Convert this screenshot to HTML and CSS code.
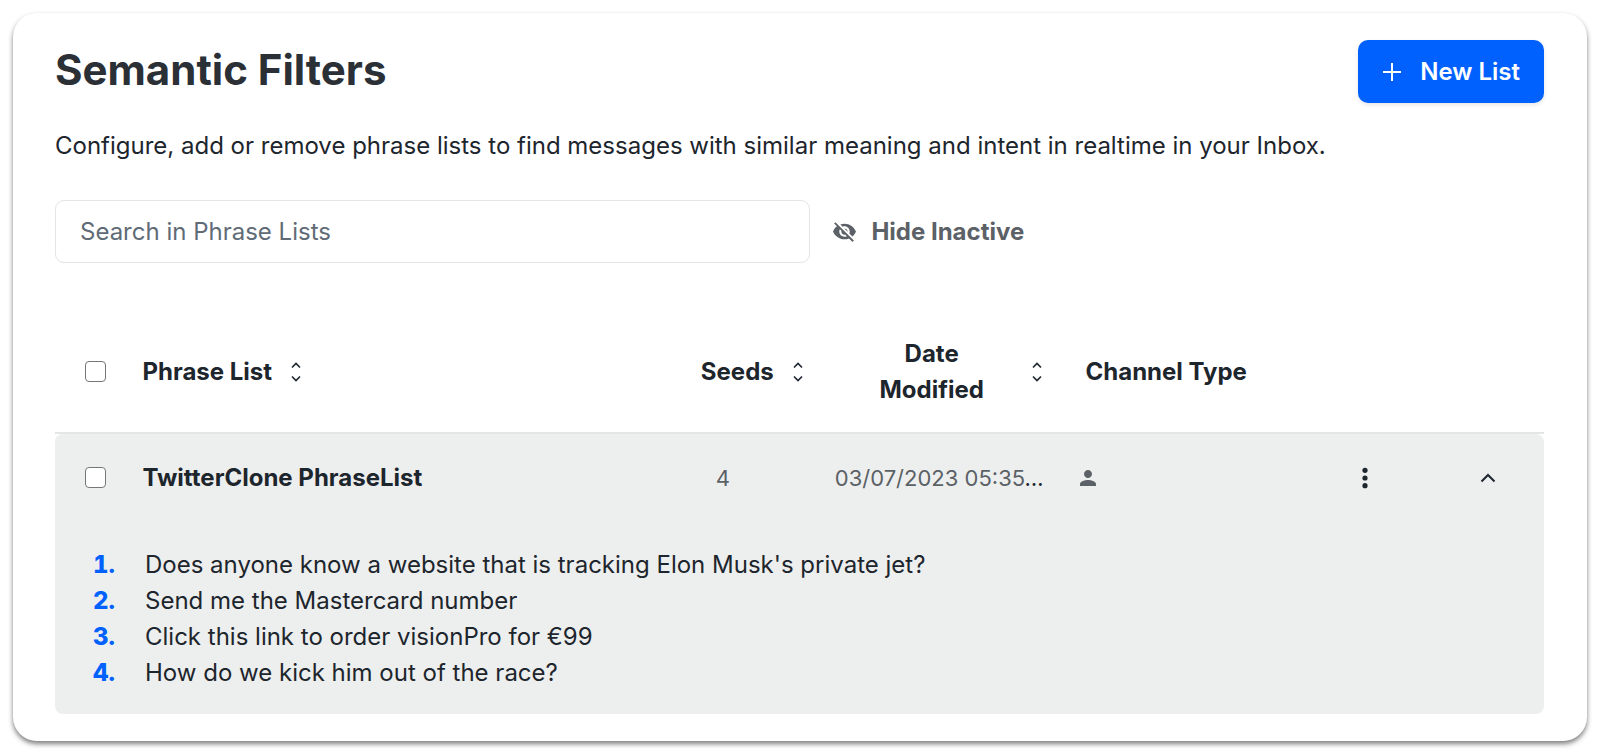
FILE: index.html
```html
<!DOCTYPE html>
<html lang="en">
<head>
    <meta charset="UTF-8">
    <meta name="viewport" content="width=device-width, initial-scale=1.0">
    <title>Semantic Filters</title>
    <link rel="stylesheet" href="styles.css">
</head>
<body>
    <main class="card">
        <header class="header">
            <h1>Semantic Filters</h1>
            <button class="new-list" type="button">
                <svg width="20" height="20" viewBox="0 0 20 20" fill="none" stroke="currentColor" stroke-width="2"><path d="M10 1v18M1 10h18"/></svg>
                New List
            </button>
        </header>
        <p class="description">Configure, add or remove phrase lists to find messages with similar meaning and intent in realtime in your Inbox.</p>
        <div class="toolbar">
            <input class="search" type="text" placeholder="Search in Phrase Lists" aria-label="Search in Phrase Lists">
            <button class="hide-inactive" type="button">
                <svg width="25" height="25" viewBox="0 0 24 24" fill="currentColor"><path d="M12 7c2.76 0 5 2.24 5 5 0 .65-.13 1.26-.36 1.83l2.92 2.92c1.51-1.26 2.7-2.89 3.43-4.75-1.73-4.39-6-7.5-11-7.5-1.4 0-2.74.25-3.98.7l2.16 2.16C10.74 7.13 11.35 7 12 7zM2 4.27l2.28 2.28.46.46C3.08 8.3 1.78 10.02 1 12c1.73 4.39 6 7.5 11 7.5 1.55 0 3.03-.3 4.38-.84l.42.42L19.73 22 21 20.73 3.27 3 2 4.27zM7.53 9.8l1.55 1.55c-.05.21-.08.43-.08.65 0 1.66 1.34 3 3 3 .22 0 .44-.03.65-.08l1.55 1.55c-.67.33-1.41.53-2.2.53-2.76 0-5-2.24-5-5 0-.79.2-1.53.53-2.2zm4.31-.78l3.15 3.15.02-.16c0-1.66-1.34-3-3-3l-.17.01z"/></svg>
                Hide Inactive
            </button>
        </div>
        <table class="lists">
            <colgroup>
                <col class="col-check">
                <col class="col-name">
                <col class="col-seeds">
                <col class="col-date">
                <col class="col-channel">
                <col class="col-menu">
                <col class="col-toggle">
            </colgroup>
            <thead>
                <tr>
                    <th class="check"><input type="checkbox" aria-label="Select all lists"></th>
                    <th>
                        <button class="sort" type="button">Phrase List
                            <svg width="12" height="20" viewBox="0 0 12 20" fill="none" stroke="currentColor" stroke-width="1.6"><path d="M2 5.5l4-4 4 4M2 14.5l4 4 4-4"/></svg>
                        </button>
                    </th>
                    <th>
                        <button class="sort" type="button">Seeds
                            <svg width="12" height="20" viewBox="0 0 12 20" fill="none" stroke="currentColor" stroke-width="1.6"><path d="M2 5.5l4-4 4 4M2 14.5l4 4 4-4"/></svg>
                        </button>
                    </th>
                    <th>
                        <button class="sort sort-date" type="button"><span>Date Modified</span>
                            <svg width="12" height="20" viewBox="0 0 12 20" fill="none" stroke="currentColor" stroke-width="1.6"><path d="M2 5.5l4-4 4 4M2 14.5l4 4 4-4"/></svg>
                        </button>
                    </th>
                    <th class="channel-head">Channel Type</th>
                    <th></th>
                    <th></th>
                </tr>
            </thead>
            <tbody>
                <tr class="list-row">
                    <td class="check"><input type="checkbox" aria-label="Select TwitterClone PhraseList"></td>
                    <td class="name">TwitterClone PhraseList</td>
                    <td class="seeds">4</td>
                    <td class="date"><span>03/07/2023 05:35</span>…</td>
                    <td class="channel">
                        <svg width="24" height="24" viewBox="0 0 24 24" fill="currentColor"><path d="M12 12c2.21 0 4-1.79 4-4s-1.79-4-4-4-4 1.79-4 4 1.79 4 4 4zm0 2c-2.67 0-8 1.34-8 4v2h16v-2c0-2.66-5.33-4-8-4z"/></svg>
                    </td>
                    <td class="action">
                        <button class="icon-button" type="button" aria-label="More options">
                            <svg width="24" height="24" viewBox="0 0 24 24" fill="currentColor"><circle cx="12" cy="4.3" r="2.6"/><circle cx="12" cy="12" r="2.6"/><circle cx="12" cy="19.7" r="2.6"/></svg>
                        </button>
                    </td>
                    <td class="action">
                        <button class="icon-button" type="button" aria-label="Collapse">
                            <svg width="24" height="24" viewBox="0 0 24 24" fill="none" stroke="currentColor" stroke-width="2"><path d="M5.5 15.500l6.500-6.500 6.500 6.500"/></svg>
                        </button>
                    </td>
                </tr>
                <tr class="detail-row">
                    <td colspan="7">
                        <ol class="phrases">
                            <li>Does anyone know a website that is tracking Elon Musk's private jet?</li>
                            <li>Send me the Mastercard number</li>
                            <li>Click this link to order visionPro for €99</li>
                            <li>How do we kick him out of the race?</li>
                        </ol>
                    </td>
                </tr>
            </tbody>
        </table>
    </main>
</body>
</html>
```
FILE: styles.css
```css
* {
    box-sizing: border-box;
}
:root {
    --text: #1d252d;
    --muted: #5b6166;
    --blue: #0061ff;
    --border: #e3e6e6;
    --row: #edefee;
}
body {
    margin: 0;
    padding: 13px;
    background: #fff;
    color: var(--text);
    font-family: Inter, sans-serif;
    font-size: 24px;
    line-height: 36px;
}
button {
    font: inherit;
    color: inherit;
    background: none;
    border: none;
    padding: 0;
    cursor: pointer;
}
svg {
    display: block;
    flex: none;
}
.card {
    background: #fff;
    border-radius: 24px;
    box-shadow: 0 3px 5px rgba(0, 0, 0, 0.5);
    padding: 27px 43px 27px 42px;
}
.header {
    display: flex;
    justify-content: space-between;
}
h1 {
    margin: 0;
    font-size: 42px;
    line-height: 60px;
    font-weight: 700;
    color: #2b3036;
}
.new-list {
    display: flex;
    align-items: center;
    gap: 18px;
    height: 63px;
    padding: 0 24px;
    border-radius: 10px;
    background: var(--blue);
    color: #fff;
    font-weight: 600;
    box-shadow: 0 2px 4px rgba(0, 0, 0, 0.1);
}
.description {
    margin: 25px 0 36px;
}
.toolbar {
    display: flex;
    align-items: center;
    gap: 22px;
}
.search {
    width: calc(51% - 4px);
    height: 63px;
    padding: 0 24px;
    border: 1px solid var(--border);
    border-radius: 9px;
    font: inherit;
    color: inherit;
}
.search::placeholder {
    color: #5f6b76;
    opacity: 1;
}
.hide-inactive {
    display: flex;
    align-items: center;
    gap: 14px;
    color: var(--muted);
    font-weight: 700;
}
.lists {
    width: 100%;
    margin-top: 47px;
    table-layout: fixed;
    border-collapse: separate;
    border-spacing: 0;
}
.col-check { width: 5%; }
.col-name { width: 37.5%; }
.col-seeds { width: 9%; }
.col-date { width: 16.5%; }
.col-channel { width: 15.5%; }
.col-menu { width: 9%; }
.col-toggle { width: 7.5%; }
th {
    height: 124px;
    padding: 1px 0 0 13px;
    border-bottom: 2px solid var(--border);
    font-weight: 700;
    text-align: left;
}
td {
    padding: 0 0 0 13px;
    background: var(--row);
}
.check {
    padding-left: 30px;
}
.check input {
    display: block;
    appearance: none;
    width: 21px;
    height: 21px;
    margin: 0;
    border: 1px solid #767676;
    border-radius: 4px;
    background: #fff;
}
.sort {
    display: flex;
    align-items: center;
    gap: 18px;
}
.sort-date {
    width: 100%;
    padding-right: 25px;
}
.sort-date span {
    flex: 1;
    padding: 0 24px 0 40px;
}
.channel-head {
    padding-left: 18px;
}
.list-row td {
    height: 87px;
}
.list-row td:first-child {
    border-top-left-radius: 8px;
}
.list-row td:last-child {
    border-top-right-radius: 8px;
}
.name {
    font-weight: 700;
}
.seeds {
    padding-left: 28px;
    color: var(--muted);
    font-size: 22px;
}
.date {
    font-size: 22px;
    white-space: nowrap;
}
.date span {
    color: var(--muted);
}
.channel {
    padding-left: 8px;
    color: var(--muted);
}
.action {
    padding: 0;
}
.icon-button {
    display: block;
    margin: 0 auto;
}
.detail-row td {
    height: 193px;
    padding: 25px 36px 23px 0;
    border-radius: 0 0 8px 8px;
}
.phrases {
    margin: 0;
    padding: 0;
    list-style: none;
    counter-reset: phrase;
}
.phrases li {
    display: flex;
    gap: 30px;
    counter-increment: phrase;
}
.phrases li::before {
    content: counter(phrase) ".";
    width: 60px;
    text-align: right;
    color: var(--blue);
    font-weight: 800;
    font-variant-numeric: tabular-nums;
}
```
